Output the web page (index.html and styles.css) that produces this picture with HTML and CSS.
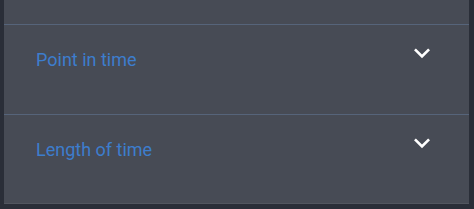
FILE: index.html
```html
<!DOCTYPE html>
<html lang="en">
<head>
    <meta charset="UTF-8">
    <meta name="viewport" content="width=device-width, initial-scale=1.0">
    <title>Time options</title>
    <link rel="stylesheet" href="styles.css">
</head>
<body>
    <div class="panel">
        <!-- tail of the previous row -->
        <div class="row-stub"></div>

        <div class="row">
            <span class="row-title">Point in time</span>
            <svg class="chevron" viewBox="0 0 24 24" width="32" height="32">
                <path d="M16.59 8.59L12 13.17 7.41 8.59 6 10l6 6 6-6z"/>
            </svg>
        </div>

        <div class="row last">
            <span class="row-title">Length of time</span>
            <svg class="chevron" viewBox="0 0 24 24" width="32" height="32">
                <path d="M16.59 8.59L12 13.17 7.41 8.59 6 10l6 6 6-6z"/>
            </svg>
        </div>
    </div>
</body>
</html>
```
FILE: styles.css
```css
body {
    margin: 0;
    background-color: #2a2e38;
    font-family: Roboto, "Noto Sans", sans-serif;
}

/* Accordion panel */
.panel {
    width: 465px;
    height: 203px;
    margin-left: 4px;
    background-color: #474b55;
    border-bottom: 1px solid #52565f;
    display: flex;
    flex-direction: column;
}

.row-stub {
    height: 24px;
}

.row {
    display: flex;
    justify-content: space-between;
    align-items: flex-start;
    height: 90px;
    padding: 12px 31px 0 32px;
    box-sizing: border-box;
    border-top: 1px solid #56647a;
}

.row.last {
    flex: 1;
}

.row-title {
    margin-top: 11px;
    font-size: 18px;
    line-height: 24px;
    color: #3d7dcd;
}

.chevron {
    fill: #ffffff;
}
```
